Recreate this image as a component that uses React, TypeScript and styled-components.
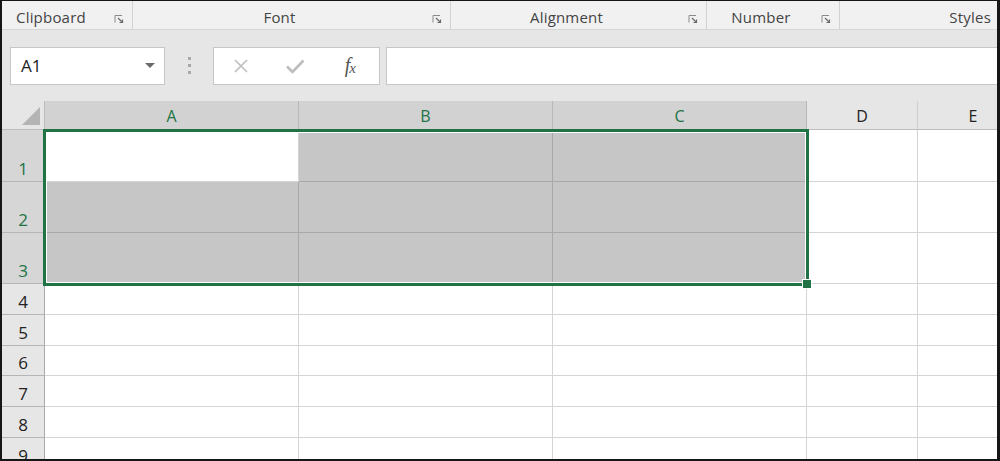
import React from "react";
import styled, { createGlobalStyle } from "styled-components";

const GlobalStyle = createGlobalStyle`
  html, body { margin: 0; padding: 0; background: #111; }
  * { box-sizing: border-box; }
`;

const Frame = styled.div`
  width: 1000px;
  height: 461px;
  overflow: hidden;
  display: flex;
  flex-direction: column;
  background: #e6e6e6;
  border-style: solid;
  border-color: #161616;
  border-width: 1px 3px 2px 2px;
  font-family: "Open Sans", "Noto Sans", sans-serif;
`;

const Ribbon = styled.div`
  height: 29px;
  flex: none;
  display: flex;
  align-items: center;
  background: #f1f1f1;
  border-bottom: 1px solid #d6d6d6;
`;

const Group = styled.div<{ $w: number; $align?: string; $sep?: boolean }>`
  width: ${(p) => p.$w}px;
  flex: ${(p) => (p.$sep ? "none" : "1")};
  height: 100%;
  display: flex;
  align-items: center;
  justify-content: ${(p) => p.$align || "center"};
  position: relative;
  padding: 4px 34px 0 10px;
  padding-left: ${(p) => (p.$align === "flex-start" ? "14px" : "10px")};
  padding-right: ${(p) => (p.$align === "flex-end" ? "6px" : "34px")};
  border-right: ${(p) => (p.$sep ? "1px solid #d2d2d2" : "none")};
  color: #444;
  font-size: 15px;
  letter-spacing: 0.2px;
`;

const Launcher = styled.svg`
  position: absolute;
  right: 8px;
  top: 13px;
`;

const DialogLauncher = () => (
  <Launcher width="10" height="10" viewBox="0 0 10 10">
    <path d="M1 8.5V1.5H8" fill="none" stroke="#8a8a8a" strokeWidth="1" />
    <path d="M4 4L8.5 8.5M8.5 5.5V8.5H5.5" fill="none" stroke="#6a6a6a" strokeWidth="1.2" />
  </Launcher>
);

const FormulaBar = styled.div`
  height: 71px;
  flex: none;
  display: flex;
  align-items: center;
  padding: 0 0 0 8px;
`;

const NameBox = styled.div`
  width: 155px;
  height: 38px;
  background: #fff;
  border: 1px solid #c6c6c6;
  display: flex;
  align-items: center;
  justify-content: space-between;
  padding: 0 9px 0 10px;
  font-size: 17px;
  color: #222;
`;

const Caret = styled.span`
  width: 0;
  height: 0;
  border-left: 5px solid transparent;
  border-right: 5px solid transparent;
  border-top: 5px solid #6a6a6a;
`;

const Grip = styled.div`
  width: 48px;
  display: flex;
  flex-direction: column;
  align-items: center;
  gap: 4px;
  span {
    width: 3px;
    height: 3px;
    background: #a8a8a8;
  }
`;

const ButtonsBox = styled.div`
  width: 167px;
  height: 38px;
  background: #fff;
  border: 1px solid #c6c6c6;
  display: grid;
  grid-template-columns: repeat(3, 1fr);
  align-items: center;
  justify-items: center;
  padding: 0 2px 0 0;
`;

const Fx = styled.span`
  font-family: "Liberation Serif", "DejaVu Serif", serif;
  font-style: italic;
  font-size: 20px;
  color: #555;
  letter-spacing: -1px;
  sub {
    font-size: 15px;
    vertical-align: -1px;
  }
`;

const FormulaInput = styled.div`
  flex: 1;
  height: 38px;
  margin-left: 6px;
  background: #fff;
  border: 1px solid #c6c6c6;
  border-right: none;
`;

const Sheet = styled.div`
  position: relative;
  flex: 1;
  display: grid;
  grid-template-columns: 43px 254px 254px 254px 111px 111px;
  grid-template-rows: 29px 52px 51px 51px 31px 31px 30px 31px 31px 31px;
  background: #fff;
  overflow: hidden;
`;

const Corner = styled.div`
  background: #e6e6e6;
  border-right: 1px solid #bdbdbd;
  border-bottom: 1px solid #bdbdbd;
  position: relative;
  &::after {
    content: "";
    position: absolute;
    right: 4px;
    bottom: 4px;
    width: 0;
    height: 0;
    border-left: 18px solid transparent;
    border-bottom: 18px solid #b4b4b4;
  }
`;

const ColHead = styled.div<{ $sel?: boolean }>`
  background: ${(p) => (p.$sel ? "#d2d2d2" : "#e6e6e6")};
  color: ${(p) => (p.$sel ? "#217346" : "#222")};
  border-right: 1px solid ${(p) => (p.$sel ? "#b8b8b8" : "#cfcfcf")};
  border-bottom: 1px solid #bdbdbd;
  display: flex;
  align-items: center;
  justify-content: center;
  font-size: 16px;
  padding-top: 1px;
`;

const RowHead = styled.div<{ $sel?: boolean }>`
  background: ${(p) => (p.$sel ? "#d6d6d6" : "#e6e6e6")};
  color: ${(p) => (p.$sel ? "#217346" : "#222")};
  border-right: 1px solid #a9a9a9;
  border-bottom: 1px solid #b5b5b5;
  display: flex;
  align-items: flex-end;
  justify-content: center;
  font-size: 17px;
  line-height: 1;
  padding-bottom: 4px;
`;

const Cell = styled.div<{ $sel?: boolean }>`
  background: ${(p) => (p.$sel ? "#c6c6c6" : "#fff")};
  border-right: 1px solid ${(p) => (p.$sel ? "#a9a9a9" : "#d4d4d4")};
  border-bottom: 1px solid ${(p) => (p.$sel ? "#a9a9a9" : "#d4d4d4")};
`;

const Selection = styled.div`
  position: absolute;
  left: 41px;
  top: 28px;
  width: 766px;
  height: 157px;
  border: 3px solid #217346;
  box-shadow: inset 0 0 0 1px #fff;
  pointer-events: none;
`;

const FillHandle = styled.div`
  position: absolute;
  right: -6px;
  bottom: -6px;
  width: 10px;
  height: 10px;
  background: #217346;
  border: 1px solid #fff;
`;

const columns = ["A", "B", "C", "D", "E"];
const rows = [1, 2, 3, 4, 5, 6, 7, 8, 9];

const isSelected = (r: number, c: number) => r <= 3 && c <= 2 && !(r === 1 && c === 0);

export default function App() {
  return (
    <>
      <GlobalStyle />
      <Frame>
        <Ribbon>
          <Group $w={131} $align="flex-start" $sep>
            Clipboard
            <DialogLauncher />
          </Group>
          <Group $w={318} $sep>
            Font
            <DialogLauncher />
          </Group>
          <Group $w={256} $sep>
            Alignment
            <DialogLauncher />
          </Group>
          <Group $w={133} $sep>
            Number
            <DialogLauncher />
          </Group>
          <Group $w={160} $align="flex-end">
            Styles
          </Group>
        </Ribbon>
        <FormulaBar>
          <NameBox>
            A1
            <Caret />
          </NameBox>
          <Grip>
            <span />
            <span />
            <span />
          </Grip>
          <ButtonsBox>
            <svg width="16" height="16" viewBox="0 0 16 16">
              <path d="M2 2L14 14M14 2L2 14" stroke="#bdbdbd" strokeWidth="1.6" fill="none" />
            </svg>
            <svg width="20" height="16" viewBox="0 0 20 16">
              <path d="M2 8.5L7.5 14L18.5 2.5" stroke="#bdbdbd" strokeWidth="2.6" fill="none" />
            </svg>
            <Fx>
              f<sub>x</sub>
            </Fx>
          </ButtonsBox>
          <FormulaInput />
        </FormulaBar>
        <Sheet>
          <Corner />
          {columns.map((c, i) => (
            <ColHead key={c} $sel={i <= 2}>
              {c}
            </ColHead>
          ))}
          {rows.map((r) => (
            <React.Fragment key={r}>
              <RowHead $sel={r <= 3}>{r}</RowHead>
              {columns.map((c, ci) => (
                <Cell key={c} $sel={isSelected(r, ci)} />
              ))}
            </React.Fragment>
          ))}
          <Selection>
            <FillHandle />
          </Selection>
        </Sheet>
      </Frame>
    </>
  );
}
